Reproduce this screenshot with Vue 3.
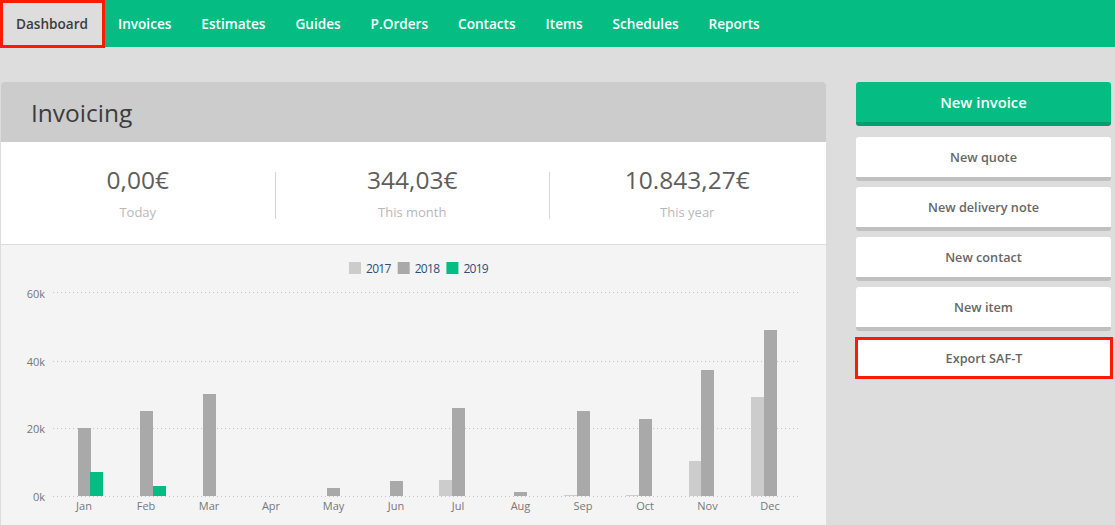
<script setup>
const navItems = ['Dashboard', 'Invoices', 'Estimates', 'Guides', 'P.Orders', 'Contacts', 'Items', 'Schedules', 'Reports']
const stats = [
  { value: '0,00€', label: 'Today' },
  { value: '344,03€', label: 'This month' },
  { value: '10.843,27€', label: 'This year' },
]
const actions = ['New quote', 'New delivery note', 'New contact', 'New item']
const legend = [
  { name: '2017', color: '#cccccc' },
  { name: '2018', color: '#a9a9a9' },
  { name: '2019', color: '#05bd83' },
]
const gridLines = [
  { y: 292.5, label: '60k', ty: 298 },
  { y: 361.5, label: '40k', ty: 366 },
  { y: 428.5, label: '20k', ty: 433 },
  { y: 496.5, label: '0k', ty: 501 },
]
const base = 496
const months = [
  { m: 'Jan', cx: 84, x: 78, b: 428, c: 472, cx2: 90 },
  { m: 'Feb', cx: 146, x: 140, b: 411, c: 486, cx2: 153 },
  { m: 'Mar', cx: 209, x: 203, b: 394 },
  { m: 'Apr', cx: 271 },
  { m: 'May', cx: 333.5, x: 327, b: 488 },
  { m: 'Jun', cx: 396, x: 390, b: 481 },
  { m: 'Jul', cx: 458, x: 452, a: 480, b: 408 },
  { m: 'Aug', cx: 520.5, x: 514, b: 492 },
  { m: 'Sep', cx: 583, x: 577, a: 495, b: 411 },
  { m: 'Oct', cx: 645, x: 639, a: 495, b: 419 },
  { m: 'Nov', cx: 707.5, x: 701, a: 461, b: 370, aw: 12 },
  { m: 'Dec', cx: 770, x: 764, a: 397, b: 330 },
]
</script>

<template>
  <div class="page">
    <nav class="nav">
      <a v-for="(n, i) in navItems" :key="n" class="nav-item" :class="{ active: i === 0 }">{{ n }}</a>
    </nav>
    <main class="layout">
      <section class="panel">
        <h1 class="panel-title">Invoicing</h1>
        <div class="stats">
          <div v-for="s in stats" :key="s.label" class="stat">
            <div class="stat-value">{{ s.value }}</div>
            <div class="stat-label">{{ s.label }}</div>
          </div>
        </div>
        <div class="chart">
          <svg class="chart-svg" width="825" height="280" viewBox="1 245 825 280">
            <g v-for="(l, i) in legend" :key="l.name">
              <rect :x="349 + i * 48.7" y="262" width="12" height="12" :fill="l.color" />
              <text :x="366 + i * 48.7" y="273" class="legend-text">{{ l.name }}</text>
            </g>
            <g v-for="g in gridLines" :key="g.label">
              <line x1="53" x2="799" :y1="g.y" :y2="g.y" class="grid" />
              <text x="45" :y="g.ty" class="axis" text-anchor="end">{{ g.label }}</text>
            </g>
            <g v-for="d in months" :key="d.m">
              <rect v-if="d.a" :x="d.x - (d.aw || 13)" :y="d.a" :width="d.aw || 13" :height="base - d.a" fill="#cccccc" />
              <rect v-if="d.b" :x="d.x" :y="d.b" width="13" :height="base - d.b" fill="#a9a9a9" />
              <rect v-if="d.c" :x="d.cx2" :y="d.c" width="13" :height="base - d.c" fill="#05bd83" />
              <text :x="d.cx" y="510" class="axis" text-anchor="middle">{{ d.m }}</text>
            </g>
          </svg>
        </div>
      </section>
      <aside class="side">
        <button class="btn primary">New invoice</button>
        <button v-for="a in actions" :key="a" class="btn">{{ a }}</button>
        <button class="btn flagged">Export SAF-T</button>
      </aside>
    </main>
  </div>
</template>

<style scoped>
.page {
  width: 1115px;
  height: 525px;
  overflow: hidden;
  background: #dddddd;
  font-family: "Open Sans", "Noto Sans", sans-serif;
}
.nav {
  display: flex;
  height: 47px;
  background: #05bd83;
}
.nav-item {
  padding: 0 15px;
  line-height: 48px;
  font-size: 13.6px;
  font-weight: 600;
  color: #fff;
}
.nav-item.active {
  box-sizing: border-box;
  width: 105px;
  height: 48px;
  padding: 0 0 0 13px;
  margin-right: -2px;
  line-height: 42px;
  background: #dddddd;
  color: #3c3c3c;
  border: 3px solid #ff1a00;
}
.layout {
  display: flex;
  align-items: flex-start;
  justify-content: space-between;
  padding: 35px 4px 0 1px;
}
.panel {
  width: 825px;
  height: 443px;
  overflow: hidden;
  border-radius: 3px 3px 0 0;
  background: #fff;
}
.panel-title {
  margin: 0;
  height: 60px;
  padding-left: 30px;
  background: #cccccc;
  font-size: 24.5px;
  font-weight: 400;
  line-height: 61px;
  color: #3c3c3c;
}
.stats {
  display: flex;
  align-items: flex-start;
  box-sizing: border-box;
  height: 103px;
  padding-top: 30px;
  border-bottom: 1px solid #dddddd;
}
.stat {
  box-sizing: border-box;
  width: 274.5px;
  height: 47px;
  text-align: center;
  border-right: 1px solid #d5d5d5;
}
.stat:last-child {
  border-right: 0;
}
.stat-value {
  font-size: 24.5px;
  line-height: 28px;
  margin-top: -6px;
  color: #5e5e5e;
}
.stat-label {
  margin-top: 8px;
  font-size: 13px;
  line-height: 20px;
  color: #b8b8b8;
}
.chart {
  height: 280px;
  background: #f4f4f4;
}
.chart-svg {
  display: block;
}
.grid {
  stroke: #c4c4c4;
  stroke-width: 1;
  stroke-dasharray: 1 3;
}
.axis {
  font-size: 11px;
  fill: #777;
}
.legend-text {
  font-size: 12px;
  letter-spacing: -0.7px;
  fill: #2c5078;
}
.side {
  display: flex;
  flex-direction: column;
  width: 255px;
  gap: 6px;
}
.btn {
  box-sizing: border-box;
  height: 44px;
  border: 0;
  border-bottom: 4px solid #c0c0c0;
  border-radius: 3px;
  background: #fff;
  font-family: inherit;
  font-size: 12.7px;
  font-weight: 600;
  color: #666;
  padding: 0;
}
.btn.primary {
  margin-bottom: 5px;
  background: #05bd83;
  border-bottom-color: #039e6d;
  color: #fff;
  font-size: 14.8px;
}
.btn.flagged {
  margin: 0 -2px 0 -1px;
  width: 258px;
  height: 42px;
  padding-bottom: 1px;
  border: 3px solid #ff1a00;
  border-radius: 0;
}
</style>
